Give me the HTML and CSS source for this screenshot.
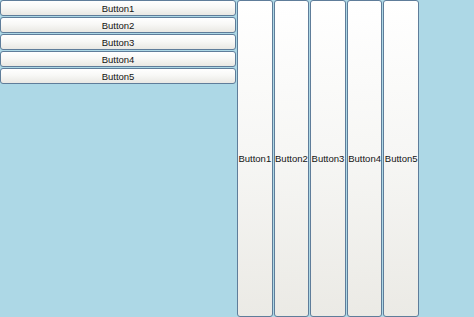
FILE: index.html
```html
<!DOCTYPE html>
<html lang="en">
<head>
  <meta charset="UTF-8">
  <title>Stack Panels</title>
  <link rel="stylesheet" href="styles.css">
</head>
<body>

  <div class="window">
    <div class="stack-vertical">
      <button class="btn">Button1</button>
      <button class="btn">Button2</button>
      <button class="btn">Button3</button>
      <button class="btn">Button4</button>
      <button class="btn">Button5</button>
    </div>

    <div class="stack-horizontal">
      <button class="btn tall">Button1</button>
      <button class="btn tall">Button2</button>
      <button class="btn tall">Button3</button>
      <button class="btn tall">Button4</button>
      <button class="btn tall">Button5</button>
    </div>
  </div>

</body>
</html>
```

FILE: styles.css
```css
body {
  margin: 0;
  background: #add8e6;
  font-family: 'Liberation Sans', Arial, sans-serif;
}

.window {
  display: flex;
  width: 474px;
  height: 317px;
}

.stack-vertical {
  display: flex;
  flex-direction: column;
  gap: 1px;
  width: 236px;
  margin-right: 1px;
}

.stack-horizontal {
  display: flex;
  gap: 1px;
}

.btn {
  display: flex;
  align-items: center;
  justify-content: center;
  height: 16px;
  padding: 0;
  margin: 0;
  font-family: inherit;
  font-size: 9.5px;
  color: #141414;
  border: 1px solid #5f7d9a;
  border-radius: 3px;
  background: linear-gradient(to bottom, #ffffff 0%, #f8f8f6 45%, #e9e8e3 100%);
}

.btn.tall {
  width: 35.6px;
  height: 317px;
  background: linear-gradient(to bottom, #ffffff 0%, #f6f6f4 50%, #ebeae5 100%);
}
```
